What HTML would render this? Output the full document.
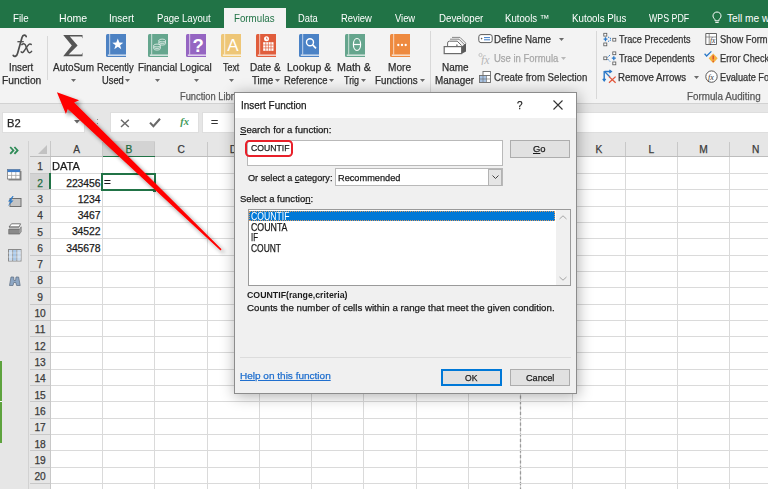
<!DOCTYPE html>
<html><head><meta charset="utf-8"><style>
html,body{margin:0;padding:0;}
.k{-webkit-text-stroke:0.25px currentColor;}
body{width:768px;height:489px;overflow:hidden;position:relative;font-family:"Liberation Sans", sans-serif;background:#e6e6e6;}
div,svg{font-family:"Liberation Sans", sans-serif;}
</style></head><body>
<div style="position:absolute;left:0.00px;top:0.00px;width:768.00px;height:28.00px;background:#217346;"></div>
<div style="position:absolute;left:224.00px;top:8.00px;width:62.00px;height:20.00px;background:#f3f3f3;"></div>
<div style="position:absolute;left:13.42px;top:13.78px;font-size:10.2px;line-height:10.2px;color:#ffffff;white-space:pre;font-weight:400;transform:scaleX(0.9574);transform-origin:0 0;">File</div>
<div style="position:absolute;left:59.15px;top:13.78px;font-size:10.2px;line-height:10.2px;color:#ffffff;white-space:pre;font-weight:400;transform:scaleX(1.0381);transform-origin:0 0;">Home</div>
<div style="position:absolute;left:109.10px;top:13.78px;font-size:10.2px;line-height:10.2px;color:#ffffff;white-space:pre;font-weight:400;transform:scaleX(0.9804);transform-origin:0 0;">Insert</div>
<div style="position:absolute;left:157.23px;top:13.78px;font-size:10.2px;line-height:10.2px;color:#ffffff;white-space:pre;font-weight:400;transform:scaleX(0.9396);transform-origin:0 0;">Page Layout</div>
<div style="position:absolute;left:234.22px;top:13.78px;font-size:10.2px;line-height:10.2px;color:#217346;white-space:pre;font-weight:400;transform:scaleX(0.9562);transform-origin:0 0;">Formulas</div>
<div style="position:absolute;left:297.86px;top:13.78px;font-size:10.2px;line-height:10.2px;color:#ffffff;white-space:pre;font-weight:400;transform:scaleX(0.9128);transform-origin:0 0;">Data</div>
<div style="position:absolute;left:340.85px;top:13.78px;font-size:10.2px;line-height:10.2px;color:#ffffff;white-space:pre;font-weight:400;transform:scaleX(0.9222);transform-origin:0 0;">Review</div>
<div style="position:absolute;left:395.41px;top:13.78px;font-size:10.2px;line-height:10.2px;color:#ffffff;white-space:pre;font-weight:400;transform:scaleX(0.9163);transform-origin:0 0;">View</div>
<div style="position:absolute;left:438.82px;top:13.78px;font-size:10.2px;line-height:10.2px;color:#ffffff;white-space:pre;font-weight:400;transform:scaleX(0.9540);transform-origin:0 0;">Developer</div>
<div style="position:absolute;left:505.23px;top:13.78px;font-size:10.2px;line-height:10.2px;color:#ffffff;white-space:pre;font-weight:400;transform:scaleX(0.9449);transform-origin:0 0;">Kutools ™</div>
<div style="position:absolute;left:571.72px;top:13.78px;font-size:10.2px;line-height:10.2px;color:#ffffff;white-space:pre;font-weight:400;transform:scaleX(0.9588);transform-origin:0 0;">Kutools Plus</div>
<div style="position:absolute;left:649.00px;top:13.78px;font-size:10.2px;line-height:10.2px;color:#ffffff;white-space:pre;font-weight:400;transform:scaleX(0.8676);transform-origin:0 0;">WPS PDF</div>
<div style="position:absolute;top:13.78px;font-size:10.2px;line-height:10.2px;color:#fff;white-space:pre;font-weight:400;left:727.00px;">Tell me wh</div>
<svg style="position:absolute;left:711.00px;top:11.00px;" width="12" height="13" viewBox="0 0 12 13"><path d="M6 1 C3.6 1 2 2.8 2 4.9 C2 6.5 3 7.4 3.9 8.5 L4.1 9.8 H7.9 L8.1 8.5 C9 7.4 10 6.5 10 4.9 C10 2.8 8.4 1 6 1 Z" fill="none" stroke="#fff" stroke-width="1"/><path d="M4.3 11.4 H7.7" stroke="#fff" stroke-width="1"/></svg>
<div style="position:absolute;left:0.00px;top:28.00px;width:768.00px;height:75.00px;background:#f3f3f3;"></div>
<div style="position:absolute;left:0.00px;top:102.50px;width:768.00px;height:1.00px;background:#d2d2d2;"></div>
<svg style="position:absolute;left:0.00px;top:28.00px;" width="40" height="34" viewBox="0 0 40 34"><g transform="translate(0,-28)"><path d="M26.2 36.6 C25.6 34.6 23 34.4 22 37.5 L17.6 53.2 C16.8 56.4 14.6 57 13.2 55.4" fill="none" stroke="#4d4d4d" stroke-width="1.7" stroke-linecap="round"/><path d="M17.4 41.7 H23.8" stroke="#4d4d4d" stroke-width="1.3"/><path d="M21.8 44.6 C23.6 43 25.2 43.6 26 46.4 L27.8 51 C28.6 53.2 30.2 53.2 31.6 51.4" fill="none" stroke="#4d4d4d" stroke-width="1.5" stroke-linecap="round"/><path d="M31.2 44.4 C30 43.4 28.8 44 27.2 46.4 L24.2 50.8 C23.2 52.6 22 53 21.2 51.8" fill="none" stroke="#4d4d4d" stroke-width="1.5" stroke-linecap="round"/></g></svg>
<div class="k" style="position:absolute;left:8.93px;top:63.20px;font-size:10.0px;line-height:10.0px;color:#2e2e2e;white-space:pre;font-weight:400;transform:scaleX(0.9667);transform-origin:0 0;">Insert</div>
<div class="k" style="position:absolute;left:1.68px;top:76.00px;font-size:10.0px;line-height:10.0px;color:#2e2e2e;white-space:pre;font-weight:400;transform:scaleX(1.0244);transform-origin:0 0;">Function</div>
<div style="position:absolute;left:47.00px;top:36.00px;width:1.00px;height:44.00px;background:#d8d8d8;"></div>
<svg style="position:absolute;left:0.00px;top:28.00px;" width="90" height="34" viewBox="0 0 90 34"><g transform="translate(0,-28)"><path d="M63.2 35.1 L82.5 35.1 L82.5 38.4 L81.6 36.6 L69.8 36.6 L77.6 45.4 L68.6 54.4 L81.6 54.4 L82.5 52.4 L82.5 56.2 L63.2 56.2 L71.8 45.4 Z" fill="#555"/></g></svg>
<div class="k" style="position:absolute;left:52.50px;top:63.20px;font-size:10.0px;line-height:10.0px;color:#2e2e2e;white-space:pre;font-weight:400;transform:scaleX(0.9951);transform-origin:0 0;">AutoSum</div>
<svg style="position:absolute;left:70.50px;top:79.30px;" width="5" height="3" viewBox="0 0 5 3"><path d="M0 0 H5 L2.5 3 Z" fill="#6a6a6a"/></svg>
<svg style="position:absolute;left:106.00px;top:34.00px;" width="20" height="23" viewBox="0 0 20 23"><path d="M1.5 0 H20 V23 H1.5 Q0 23 0 21.5 V1.5 Q0 0 1.5 0 Z" fill="#4d82c3"/><rect x="3.1" y="0" width="1.1" height="20.5" fill="#fff" opacity="0.6"/><path d="M1.8 20.6 H20 V21.7 H1.8 Z" fill="#fff"/><path d="M11.8 4.6 L13.3 8.6 L17.3 8.7 L14.1 11.2 L15.3 15.2 L11.8 12.8 L8.3 15.2 L9.5 11.2 L6.3 8.7 L10.3 8.6 Z" fill="#fff"/></svg>
<div class="k" style="position:absolute;left:97.15px;top:63.20px;font-size:10.0px;line-height:10.0px;color:#2e2e2e;white-space:pre;font-weight:400;transform:scaleX(0.9409);transform-origin:0 0;">Recently</div>
<div class="k" style="position:absolute;left:102.15px;top:76.00px;font-size:10.0px;line-height:10.0px;color:#2e2e2e;white-space:pre;font-weight:400;transform:scaleX(0.9315);transform-origin:0 0;">Used</div>
<svg style="position:absolute;left:125.30px;top:79.30px;" width="5" height="3" viewBox="0 0 5 3"><path d="M0 0 H5 L2.5 3 Z" fill="#6a6a6a"/></svg>
<svg style="position:absolute;left:148.00px;top:34.00px;" width="20" height="23" viewBox="0 0 20 23"><path d="M1.5 0 H20 V23 H1.5 Q0 23 0 21.5 V1.5 Q0 0 1.5 0 Z" fill="#65a68e"/><rect x="3.1" y="0" width="1.1" height="20.5" fill="#fff" opacity="0.6"/><path d="M1.8 20.6 H20 V21.7 H1.8 Z" fill="#fff"/><g fill="none" stroke="#fff" stroke-width="0.9" opacity="0.75"><ellipse cx="14.2" cy="6.5" rx="3.3" ry="1.4"/><path d="M10.899999999999999 6.5 V9.7 A3.3 1.4 0 0 0 17.5 9.7 V6.5"/><path d="M10.899999999999999 8.1 A3.3 1.4 0 0 0 17.5 8.1"/></g><g fill="none" stroke="#fff" stroke-width="0.9" opacity="0.75"><ellipse cx="9" cy="11.5" rx="3.3" ry="1.4"/><path d="M5.7 11.5 V14.7 A3.3 1.4 0 0 0 12.3 14.7 V11.5"/><path d="M5.7 13.1 A3.3 1.4 0 0 0 12.3 13.1"/></g></svg>
<div class="k" style="position:absolute;left:137.52px;top:63.20px;font-size:10.0px;line-height:10.0px;color:#2e2e2e;white-space:pre;font-weight:400;transform:scaleX(0.9767);transform-origin:0 0;">Financial</div>
<svg style="position:absolute;left:154.50px;top:79.30px;" width="5" height="3" viewBox="0 0 5 3"><path d="M0 0 H5 L2.5 3 Z" fill="#6a6a6a"/></svg>
<svg style="position:absolute;left:186.00px;top:34.00px;" width="20" height="23" viewBox="0 0 20 23"><path d="M1.5 0 H20 V23 H1.5 Q0 23 0 21.5 V1.5 Q0 0 1.5 0 Z" fill="#9565c2"/><rect x="3.1" y="0" width="1.1" height="20.5" fill="#fff" opacity="0.6"/><path d="M1.8 20.6 H20 V21.7 H1.8 Z" fill="#fff"/><text x="12.2" y="17.6" text-anchor="middle" font-family="Liberation Sans" font-weight="700" font-size="18.5" fill="#fff">?</text></svg>
<div class="k" style="position:absolute;left:180.20px;top:63.20px;font-size:10.0px;line-height:10.0px;color:#2e2e2e;white-space:pre;font-weight:400;transform:scaleX(1.0017);transform-origin:0 0;">Logical</div>
<svg style="position:absolute;left:194.00px;top:79.30px;" width="5" height="3" viewBox="0 0 5 3"><path d="M0 0 H5 L2.5 3 Z" fill="#6a6a6a"/></svg>
<svg style="position:absolute;left:221.00px;top:34.00px;" width="20" height="23" viewBox="0 0 20 23"><path d="M1.5 0 H20 V23 H1.5 Q0 23 0 21.5 V1.5 Q0 0 1.5 0 Z" fill="#eec677"/><rect x="3.1" y="0" width="1.1" height="20.5" fill="#fff" opacity="0.6"/><path d="M1.8 20.6 H20 V21.7 H1.8 Z" fill="#fff"/><text x="12" y="17.2" text-anchor="middle" font-family="Liberation Sans" font-size="17" fill="#fff">A</text></svg>
<div class="k" style="position:absolute;left:222.72px;top:63.20px;font-size:10.0px;line-height:10.0px;color:#2e2e2e;white-space:pre;font-weight:400;transform:scaleX(0.8895);transform-origin:0 0;">Text</div>
<svg style="position:absolute;left:228.50px;top:79.30px;" width="5" height="3" viewBox="0 0 5 3"><path d="M0 0 H5 L2.5 3 Z" fill="#6a6a6a"/></svg>
<svg style="position:absolute;left:255.60px;top:34.00px;" width="20" height="23" viewBox="0 0 20 23"><path d="M1.5 0 H20 V23 H1.5 Q0 23 0 21.5 V1.5 Q0 0 1.5 0 Z" fill="#e05d3c"/><rect x="3.1" y="0" width="1.1" height="20.5" fill="#fff" opacity="0.6"/><path d="M1.8 20.6 H20 V21.7 H1.8 Z" fill="#fff"/><circle cx="10.5" cy="4.8" r="2.5" fill="#fff"/><path d="M10.5 3.4 V5 H11.8" stroke="#e05d3c" stroke-width="0.7" fill="none"/><rect x="7.2" y="8.2" width="10.3" height="8.6" fill="#fff"/><path d="M7.2 11 H17.5 M7.2 13.9 H17.5 M9.8 8.2 V16.8 M12.4 8.2 V16.8 M15 8.2 V16.8" stroke="#e05d3c" stroke-width="0.7"/></svg>
<div class="k" style="position:absolute;left:249.70px;top:62.80px;font-size:10.0px;line-height:10.0px;color:#2e2e2e;white-space:pre;font-weight:400;transform:scaleX(1.0034);transform-origin:0 0;">Date &amp;</div>
<div class="k" style="position:absolute;left:252.21px;top:75.60px;font-size:10.0px;line-height:10.0px;color:#2e2e2e;white-space:pre;font-weight:400;transform:scaleX(0.9717);transform-origin:0 0;">Time</div>
<svg style="position:absolute;left:275.10px;top:79.30px;" width="5" height="3" viewBox="0 0 5 3"><path d="M0 0 H5 L2.5 3 Z" fill="#6a6a6a"/></svg>
<svg style="position:absolute;left:299.00px;top:34.00px;" width="20" height="23" viewBox="0 0 20 23"><path d="M1.5 0 H20 V23 H1.5 Q0 23 0 21.5 V1.5 Q0 0 1.5 0 Z" fill="#4a82c6"/><rect x="3.1" y="0" width="1.1" height="20.5" fill="#fff" opacity="0.6"/><path d="M1.8 20.6 H20 V21.7 H1.8 Z" fill="#fff"/><circle cx="11" cy="8.3" r="3.5" fill="none" stroke="#fff" stroke-width="1.4"/><path d="M13.6 10.9 L17 14.3" stroke="#fff" stroke-width="1.7"/></svg>
<div class="k" style="position:absolute;left:286.86px;top:62.80px;font-size:10.0px;line-height:10.0px;color:#2e2e2e;white-space:pre;font-weight:400;transform:scaleX(1.0484);transform-origin:0 0;">Lookup &amp;</div>
<div class="k" style="position:absolute;left:283.95px;top:75.60px;font-size:10.0px;line-height:10.0px;color:#2e2e2e;white-space:pre;font-weight:400;transform:scaleX(0.9421);transform-origin:0 0;">Reference</div>
<svg style="position:absolute;left:328.70px;top:79.30px;" width="5" height="3" viewBox="0 0 5 3"><path d="M0 0 H5 L2.5 3 Z" fill="#6a6a6a"/></svg>
<svg style="position:absolute;left:344.70px;top:34.00px;" width="20" height="23" viewBox="0 0 20 23"><path d="M1.5 0 H20 V23 H1.5 Q0 23 0 21.5 V1.5 Q0 0 1.5 0 Z" fill="#65a58d"/><rect x="3.1" y="0" width="1.1" height="20.5" fill="#fff" opacity="0.6"/><path d="M1.8 20.6 H20 V21.7 H1.8 Z" fill="#fff"/><ellipse cx="12" cy="10.5" rx="3.6" ry="6" fill="none" stroke="#fff" stroke-width="1.2"/><path d="M8.4 10.5 H15.6" stroke="#fff" stroke-width="1.2"/></svg>
<div class="k" style="position:absolute;left:336.94px;top:62.80px;font-size:10.0px;line-height:10.0px;color:#2e2e2e;white-space:pre;font-weight:400;transform:scaleX(1.0717);transform-origin:0 0;">Math &amp;</div>
<div class="k" style="position:absolute;left:343.82px;top:75.60px;font-size:10.0px;line-height:10.0px;color:#2e2e2e;white-space:pre;font-weight:400;transform:scaleX(0.8938);transform-origin:0 0;">Trig</div>
<svg style="position:absolute;left:360.70px;top:79.30px;" width="5" height="3" viewBox="0 0 5 3"><path d="M0 0 H5 L2.5 3 Z" fill="#6a6a6a"/></svg>
<svg style="position:absolute;left:389.70px;top:34.00px;" width="20" height="23" viewBox="0 0 20 23"><path d="M1.5 0 H20 V23 H1.5 Q0 23 0 21.5 V1.5 Q0 0 1.5 0 Z" fill="#ee8a3f"/><rect x="3.1" y="0" width="1.1" height="20.5" fill="#fff" opacity="0.6"/><path d="M1.8 20.6 H20 V21.7 H1.8 Z" fill="#fff"/><circle cx="8.3" cy="11" r="1.15" fill="#fff"/><circle cx="12" cy="11" r="1.15" fill="#fff"/><circle cx="15.7" cy="11" r="1.15" fill="#fff"/></svg>
<div class="k" style="position:absolute;left:388.19px;top:62.80px;font-size:10.0px;line-height:10.0px;color:#2e2e2e;white-space:pre;font-weight:400;transform:scaleX(1.0093);transform-origin:0 0;">More</div>
<div class="k" style="position:absolute;left:374.82px;top:75.60px;font-size:10.0px;line-height:10.0px;color:#2e2e2e;white-space:pre;font-weight:400;transform:scaleX(0.9810);transform-origin:0 0;">Functions</div>
<svg style="position:absolute;left:419.50px;top:79.30px;" width="5" height="3" viewBox="0 0 5 3"><path d="M0 0 H5 L2.5 3 Z" fill="#6a6a6a"/></svg>
<div class="k" style="position:absolute;top:91.60px;font-size:10.0px;line-height:10.0px;color:#595959;white-space:pre;font-weight:400;left:179.50px;transform:scaleX(0.93);transform-origin:0 0;">Function Library</div>
<div style="position:absolute;left:430.30px;top:31.00px;width:1.00px;height:68.00px;background:#d8d8d8;"></div>
<svg style="position:absolute;left:438.00px;top:32.00px;" width="34" height="28" viewBox="0 0 34 28"><g transform="translate(-438,-32)"><path d="M452 37.4 H460 L466 43.4" fill="none" stroke="#7a7a7a" stroke-width="0.9"/><path d="M450 39.2 H459 L465 45.2" fill="none" stroke="#7a7a7a" stroke-width="0.9"/><path d="M447.6 46.4 V43 Q447.6 41.2 449.4 41.2 H457.2 L461.6 45.6" fill="#fff" stroke="#6b6b6b" stroke-width="1"/><circle cx="456.9" cy="45.2" r="0.9" fill="#8a8a8a"/><path d="M461.8 46.4 L466 43.2 V51.6 L461.8 53.8 Z" fill="#5a5a5a"/><rect x="444.2" y="46.6" width="17.4" height="7" fill="#fff" stroke="#6b6b6b" stroke-width="1.2"/></g></svg>
<div class="k" style="position:absolute;left:441.80px;top:62.80px;font-size:10.0px;line-height:10.0px;color:#2e2e2e;white-space:pre;font-weight:400;transform:scaleX(0.9961);transform-origin:0 0;">Name</div>
<div class="k" style="position:absolute;left:435.11px;top:75.60px;font-size:10.0px;line-height:10.0px;color:#2e2e2e;white-space:pre;font-weight:400;transform:scaleX(0.9896);transform-origin:0 0;">Manager</div>
<svg style="position:absolute;left:478.00px;top:34.00px;" width="15" height="10" viewBox="0 0 15 10"><rect x="0.8" y="0.6" width="13.4" height="8" rx="2.2" fill="#fff" stroke="#5a5a5a" stroke-width="1"/><path d="M6 3.6 H12 M6 5.8 H12" stroke="#3d7cc9" stroke-width="1"/><circle cx="3.6" cy="4.6" r="0.8" fill="#5a5a5a"/></svg>
<div class="k" style="position:absolute;left:494.02px;top:35.40px;font-size:10.0px;line-height:10.0px;color:#333;white-space:pre;font-weight:400;transform:scaleX(0.9755);transform-origin:0 0;">Define Name</div>
<svg style="position:absolute;left:558.50px;top:38.10px;" width="5" height="3" viewBox="0 0 5 3"><path d="M0 0 H5 L2.5 3 Z" fill="#6a6a6a"/></svg>
<svg style="position:absolute;left:478.00px;top:52.00px;" width="14" height="13" viewBox="0 0 14 13"><text x="3" y="11.5" font-family="Liberation Serif" font-style="italic" font-size="12" fill="#b8b8b8">fx</text><circle cx="2.5" cy="3" r="1.6" fill="none" stroke="#b8b8b8" stroke-width="0.8"/></svg>
<div class="k" style="position:absolute;left:494.04px;top:53.90px;font-size:10.0px;line-height:10.0px;color:#a8a8a8;white-space:pre;font-weight:400;transform:scaleX(0.9478);transform-origin:0 0;">Use in Formula</div>
<svg style="position:absolute;left:560.80px;top:57.30px;" width="5" height="3" viewBox="0 0 5 3"><path d="M0 0 H5 L2.5 3 Z" fill="#b8b8b8"/></svg>
<svg style="position:absolute;left:479.00px;top:71.00px;" width="12" height="12" viewBox="0 0 12 12"><rect x="4" y="0.5" width="7.5" height="5" fill="#fff" stroke="#6b6b6b" stroke-width="0.9"/><rect x="0.5" y="4.5" width="11" height="7" fill="#fff" stroke="#6b6b6b" stroke-width="0.9"/><rect x="1" y="5" width="6.5" height="6" fill="#a9c4e4"/><path d="M0.5 8 H11.5 M4 4.5 V11.5 M7.5 4.5 V11.5" stroke="#6b6b6b" stroke-width="0.6"/></svg>
<div class="k" style="position:absolute;left:494.32px;top:72.80px;font-size:10.0px;line-height:10.0px;color:#333;white-space:pre;font-weight:400;transform:scaleX(0.9644);transform-origin:0 0;">Create from Selection</div>
<div style="position:absolute;left:596.00px;top:31.00px;width:1.00px;height:68.00px;background:#d8d8d8;"></div>
<svg style="position:absolute;left:602.00px;top:32.00px;" width="16" height="15" viewBox="0 0 16 15"><g transform="translate(-602,-32)"><rect x="603.8" y="33.3" width="3" height="2.8" fill="#fff" stroke="#555" stroke-width="0.8"/><rect x="603.8" y="43.0" width="3" height="2.8" fill="#fff" stroke="#555" stroke-width="0.8"/><rect x="612.8" y="38.3" width="3" height="2.8" fill="#fff" stroke="#555" stroke-width="0.8"/><path d="M603.6 39.2 H607.4 M605.5 37.2 V41.2" stroke="#2a78c8" stroke-width="1.3"/><path d="M608 37 L611 38.6 M608 41.5 L611 39.9" stroke="#2a78c8" stroke-width="1" stroke-dasharray="1.4 0.8"/></g></svg>
<div class="k" style="position:absolute;left:618.82px;top:35.40px;font-size:10.0px;line-height:10.0px;color:#333;white-space:pre;font-weight:400;transform:scaleX(0.9103);transform-origin:0 0;">Trace Precedents</div>
<svg style="position:absolute;left:602.00px;top:50.00px;" width="16" height="16" viewBox="0 0 16 16"><g transform="translate(-602,-50)"><rect x="603.8" y="56.9" width="3" height="2.8" fill="#fff" stroke="#555" stroke-width="0.8"/><rect x="612.8" y="51.9" width="3" height="2.8" fill="#fff" stroke="#555" stroke-width="0.8"/><rect x="612.8" y="62.0" width="3" height="2.8" fill="#fff" stroke="#555" stroke-width="0.8"/><path d="M611.8 58.2 H615.8 M613.8 56.2 V60.2" stroke="#2a78c8" stroke-width="1.3"/><path d="M607.5 57.5 L610.5 54.5 M607.5 59 L610.5 62" stroke="#2a78c8" stroke-width="1" stroke-dasharray="1.4 0.8"/></g></svg>
<div class="k" style="position:absolute;left:618.82px;top:54.20px;font-size:10.0px;line-height:10.0px;color:#333;white-space:pre;font-weight:400;transform:scaleX(0.9225);transform-origin:0 0;">Trace Dependents</div>
<svg style="position:absolute;left:602.00px;top:69.00px;" width="16" height="16" viewBox="0 0 16 16"><g transform="translate(-602,-69)"><path d="M604.2 71 V80.5 M602.8 78.8 L604.2 80.8 L605.6 78.8" stroke="#2a78c8" stroke-width="1.4" fill="none"/><path d="M604.5 71.5 H611 M609.4 70 L611.4 71.5 L609.4 73" stroke="#2a78c8" stroke-width="1.3" fill="none"/><path d="M605 72 L610 77" stroke="#2a78c8" stroke-width="1.2"/><path d="M609 76.6 L615.6 82.8 M615.6 76.6 L609 82.8" stroke="#e2563b" stroke-width="1.3"/></g></svg>
<div class="k" style="position:absolute;left:618.23px;top:72.80px;font-size:10.0px;line-height:10.0px;color:#333;white-space:pre;font-weight:400;transform:scaleX(0.9654);transform-origin:0 0;">Remove Arrows</div>
<svg style="position:absolute;left:694.00px;top:76.10px;" width="5" height="3" viewBox="0 0 5 3"><path d="M0 0 H5 L2.5 3 Z" fill="#6a6a6a"/></svg>
<svg style="position:absolute;left:704.00px;top:32.00px;" width="15" height="14" viewBox="0 0 15 14"><g transform="translate(-704,-32)"><path d="M705.8 33.5 H716.5 V44.5 H705.8 Z" fill="#fff" stroke="#666" stroke-width="1"/><path d="M705.8 37 H716.5 M709.2 33.5 V44.5" stroke="#777" stroke-width="0.8"/><text x="710" y="43" font-family="Liberation Serif" font-style="italic" font-size="7.5" fill="#333">fx</text></g></svg>
<div class="k" style="position:absolute;top:35.40px;font-size:10.0px;line-height:10.0px;color:#333;white-space:pre;font-weight:400;left:720.20px;transform:scaleX(0.93);transform-origin:0 0;">Show Formulas</div>
<svg style="position:absolute;left:704.00px;top:50.00px;" width="15" height="15" viewBox="0 0 15 15"><g transform="translate(-704,-50)"><path d="M708.6 53.4 L713.1 58.3 L708.6 63.2 L704.1 58.3 Z" transform="translate(4.6,0)" fill="#f5b342"/><path d="M704.6 53.8 L706.6 56 L711.4 51.4" stroke="#2a78c8" stroke-width="1.3" fill="none"/><path d="M713.2 55.6 V59.6" stroke="#d8402a" stroke-width="1.3"/><circle cx="713.2" cy="61.2" r="0.75" fill="#d8402a"/></g></svg>
<div class="k" style="position:absolute;top:54.20px;font-size:10.0px;line-height:10.0px;color:#333;white-space:pre;font-weight:400;left:720.20px;transform:scaleX(0.92);transform-origin:0 0;">Error Checking</div>
<svg style="position:absolute;left:704.00px;top:70.00px;" width="15" height="14" viewBox="0 0 15 14"><g transform="translate(-704,-70)"><circle cx="711.5" cy="76.6" r="5.7" fill="#fff" stroke="#555" stroke-width="1"/><text x="708" y="79.6" font-family="Liberation Serif" font-style="italic" font-size="8" fill="#333">fx</text></g></svg>
<div class="k" style="position:absolute;top:72.80px;font-size:10.0px;line-height:10.0px;color:#333;white-space:pre;font-weight:400;left:720.20px;transform:scaleX(0.92);transform-origin:0 0;">Evaluate Formula</div>
<div class="k" style="position:absolute;left:687.12px;top:91.70px;font-size:10.0px;line-height:10.0px;color:#595959;white-space:pre;font-weight:400;transform:scaleX(0.9810);transform-origin:0 0;">Formula Auditing</div>
<div style="position:absolute;left:0.00px;top:103.50px;width:768.00px;height:385.50px;background:#e6e6e6;"></div>
<div style="position:absolute;left:1.50px;top:112.30px;width:83.00px;height:20.70px;background:#fff;box-sizing:border-box;border:1px solid #dedede;"></div>
<div class="k" style="position:absolute;left:6.80px;top:118.86px;font-size:10.4px;line-height:10.4px;color:#262626;white-space:pre;font-weight:400;transform:scaleX(1.0762);transform-origin:0 0;">B2</div>
<svg style="position:absolute;left:73.50px;top:120.00px;" width="6" height="4" viewBox="0 0 6 4"><path d="M0 0 H6 L3 3.5 Z" fill="#6a6a6a"/></svg>
<div style="position:absolute;left:96.80px;top:118.70px;width:1.30px;height:1.30px;background:#8a8a8a;"></div>
<div style="position:absolute;left:96.80px;top:122.50px;width:1.30px;height:1.30px;background:#8a8a8a;"></div>
<div style="position:absolute;left:110.00px;top:112.30px;width:89.30px;height:20.70px;background:#fff;box-sizing:border-box;border:1px solid #dedede;"></div>
<svg style="position:absolute;left:120.00px;top:118.50px;" width="10" height="9" viewBox="0 0 10 9"><path d="M1 0.8 L8.8 8 M8.8 0.8 L1 8" stroke="#6a6a6a" stroke-width="1.5"/></svg>
<svg style="position:absolute;left:148.50px;top:118.00px;" width="12" height="10" viewBox="0 0 12 10"><path d="M1 4.6 L4.4 8.2 L11 0.8" stroke="#6a6a6a" stroke-width="2.1" fill="none"/></svg>
<svg style="position:absolute;left:178.50px;top:115.00px;" width="13" height="13" viewBox="0 0 13 13"><text x="1.2" y="10" font-family="Liberation Serif" font-style="italic" font-weight="700" font-size="10.5" fill="#3f9a5a">fx</text></svg>
<div style="position:absolute;left:202.30px;top:112.30px;width:566.00px;height:20.70px;background:#fff;box-sizing:border-box;border:1px solid #dedede;border-right:none;"></div>
<div class="k" style="position:absolute;left:210.99px;top:117.60px;font-size:10px;line-height:10px;color:#333;white-space:pre;font-weight:400;transform:scaleX(1.2245);transform-origin:0 0;">=</div>
<div style="position:absolute;left:28.00px;top:140.50px;width:1.00px;height:348.50px;background:#d2d2d2;"></div>
<svg style="position:absolute;left:9.00px;top:146.00px;" width="10" height="9" viewBox="0 0 10 9"><path d="M1.2 1 L4.4 4.4 L1.2 7.8 M5.4 1 L8.6 4.4 L5.4 7.8" stroke="#2e8b57" stroke-width="1.8" fill="none"/></svg>
<svg style="position:absolute;left:7.00px;top:169.00px;" width="15" height="12" viewBox="0 0 15 12"><rect x="1.5" y="2" width="13" height="9.5" fill="#888"/><rect x="0.5" y="0.5" width="12.5" height="9.5" fill="#fff" stroke="#7a7a7a" stroke-width="0.8"/><rect x="0.5" y="0.5" width="12.5" height="2.6" fill="#3d7cc9"/><path d="M0.5 6.4 H13 M4.6 3 V10 M8.8 3 V10" stroke="#9a9a9a" stroke-width="0.7"/></svg>
<svg style="position:absolute;left:6.50px;top:196.00px;" width="15" height="11" viewBox="0 0 15 11"><rect x="3" y="2.5" width="11" height="8" fill="#c4c4c4" stroke="#707070" stroke-width="1"/><path d="M5.6 0 L1 5.4 H3.6 L0.8 10.2 L6.6 4.4 H4.2 L6.6 0 Z" fill="#2a78c8"/></svg>
<svg style="position:absolute;left:8.00px;top:223.00px;" width="14" height="12" viewBox="0 0 14 12"><path d="M1 4 L3.5 0.8 H12.6 L11 4 Z" fill="#fff" stroke="#6a6a6a" stroke-width="0.9"/><path d="M1 6 H11.2 M1 4 H11.2" stroke="#6a6a6a" stroke-width="0.7"/><rect x="0.8" y="6.5" width="10.6" height="4.5" fill="#8a8a8a" stroke="#666" stroke-width="0.7"/><path d="M11.4 6.5 L13.2 3.8 V8.8 L11.4 11" fill="#aaa" stroke="#666" stroke-width="0.6"/></svg>
<svg style="position:absolute;left:8.00px;top:249.00px;" width="14" height="13" viewBox="0 0 14 13"><rect x="0.5" y="0.5" width="12.5" height="11.5" fill="#fff" stroke="#8a8a8a" stroke-width="1"/><rect x="1" y="1" width="3.3" height="10.5" fill="#c9dcf0"/><rect x="4.9" y="1" width="3.6" height="10.5" fill="#a9c9ea"/><rect x="9.1" y="1" width="3.4" height="10.5" fill="#c9dcf0"/><path d="M4.6 0.5 V12 M8.8 0.5 V12" stroke="#8a8a8a" stroke-width="0.8"/><path d="M0.5 4 H13 M0.5 8 H13" stroke="#fff" stroke-width="0.8" stroke-dasharray="1 1"/></svg>
<svg style="position:absolute;left:8.00px;top:275.00px;" width="14" height="12" viewBox="0 0 14 12"><path d="M1.5 10.5 L3 2 H5.6 L6 5.5 H7.6 L8 2 H10.6 L12.2 10.5 H8.6 L7.8 7.5 H5.8 L5 10.5 Z" fill="#8ea7c4" stroke="#5a6a80" stroke-width="0.7"/></svg>
<div style="position:absolute;left:0.00px;top:361.00px;width:2.00px;height:82.00px;background:#5ea33e;"></div>
<div style="position:absolute;left:0.00px;top:400.50px;width:2.00px;height:1.50px;background:#fff;"></div>
<div style="position:absolute;left:29.50px;top:141.40px;width:738.50px;height:15.78px;background:#e6e6e6;"></div>
<div style="position:absolute;left:29.50px;top:157.00px;width:21.00px;height:332.00px;background:#e6e6e6;"></div>
<div style="position:absolute;left:50.50px;top:157.00px;width:717.50px;height:332.00px;background:#fff;"></div>
<div style="position:absolute;left:102.74px;top:141.40px;width:52.24px;height:14.60px;background:#d3d3d3;"></div>
<div style="position:absolute;left:29.50px;top:173.50px;width:21.00px;height:16.32px;background:#d3d3d3;"></div>
<div style="position:absolute;left:50.00px;top:141.40px;width:1.00px;height:347.60px;background:#c8c8c8;"></div>
<div style="position:absolute;left:102.24px;top:141.90px;width:1.00px;height:15.78px;background:#c8c8c8;"></div>
<div style="position:absolute;left:102.24px;top:157.18px;width:1.00px;height:331.82px;background:#dadada;"></div>
<div style="position:absolute;left:154.48px;top:141.90px;width:1.00px;height:15.78px;background:#c8c8c8;"></div>
<div style="position:absolute;left:154.48px;top:157.18px;width:1.00px;height:331.82px;background:#dadada;"></div>
<div style="position:absolute;left:206.72px;top:141.90px;width:1.00px;height:15.78px;background:#c8c8c8;"></div>
<div style="position:absolute;left:206.72px;top:157.18px;width:1.00px;height:331.82px;background:#dadada;"></div>
<div style="position:absolute;left:258.96px;top:141.90px;width:1.00px;height:15.78px;background:#c8c8c8;"></div>
<div style="position:absolute;left:258.96px;top:157.18px;width:1.00px;height:331.82px;background:#dadada;"></div>
<div style="position:absolute;left:311.20px;top:141.90px;width:1.00px;height:15.78px;background:#c8c8c8;"></div>
<div style="position:absolute;left:311.20px;top:157.18px;width:1.00px;height:331.82px;background:#dadada;"></div>
<div style="position:absolute;left:363.44px;top:141.90px;width:1.00px;height:15.78px;background:#c8c8c8;"></div>
<div style="position:absolute;left:363.44px;top:157.18px;width:1.00px;height:331.82px;background:#dadada;"></div>
<div style="position:absolute;left:415.68px;top:141.90px;width:1.00px;height:15.78px;background:#c8c8c8;"></div>
<div style="position:absolute;left:415.68px;top:157.18px;width:1.00px;height:331.82px;background:#dadada;"></div>
<div style="position:absolute;left:467.92px;top:141.90px;width:1.00px;height:15.78px;background:#c8c8c8;"></div>
<div style="position:absolute;left:467.92px;top:157.18px;width:1.00px;height:331.82px;background:#dadada;"></div>
<div style="position:absolute;left:520.16px;top:141.90px;width:1.00px;height:15.78px;background:#c8c8c8;"></div>
<div style="position:absolute;left:520.16px;top:157.18px;width:1.00px;height:331.82px;background:#dadada;"></div>
<svg style="position:absolute;left:519.16px;top:157.18px" width="3" height="332"><path d="M1.5 1 V340" stroke="#9a9a9a" stroke-width="1.3" stroke-dasharray="3.2 2.2"/></svg>
<div style="position:absolute;left:572.40px;top:141.90px;width:1.00px;height:15.78px;background:#c8c8c8;"></div>
<div style="position:absolute;left:572.40px;top:157.18px;width:1.00px;height:331.82px;background:#dadada;"></div>
<div style="position:absolute;left:624.64px;top:141.90px;width:1.00px;height:15.78px;background:#c8c8c8;"></div>
<div style="position:absolute;left:624.64px;top:157.18px;width:1.00px;height:331.82px;background:#dadada;"></div>
<div style="position:absolute;left:676.88px;top:141.90px;width:1.00px;height:15.78px;background:#c8c8c8;"></div>
<div style="position:absolute;left:676.88px;top:157.18px;width:1.00px;height:331.82px;background:#dadada;"></div>
<div style="position:absolute;left:729.12px;top:141.90px;width:1.00px;height:15.78px;background:#c8c8c8;"></div>
<div style="position:absolute;left:729.12px;top:157.18px;width:1.00px;height:331.82px;background:#dadada;"></div>
<div style="position:absolute;left:781.36px;top:141.90px;width:1.00px;height:15.78px;background:#c8c8c8;"></div>
<div style="position:absolute;left:781.36px;top:157.18px;width:1.00px;height:331.82px;background:#dadada;"></div>
<div style="position:absolute;left:29.50px;top:156.40px;width:738.50px;height:1.00px;background:#bdbdbd;"></div>
<div style="position:absolute;left:29.50px;top:173.00px;width:21.00px;height:1.00px;background:#c8c8c8;"></div>
<div style="position:absolute;left:50.50px;top:173.00px;width:717.50px;height:1.00px;background:#dadada;"></div>
<div style="position:absolute;left:29.50px;top:189.31px;width:21.00px;height:1.00px;background:#c8c8c8;"></div>
<div style="position:absolute;left:50.50px;top:189.31px;width:717.50px;height:1.00px;background:#dadada;"></div>
<div style="position:absolute;left:29.50px;top:205.63px;width:21.00px;height:1.00px;background:#c8c8c8;"></div>
<div style="position:absolute;left:50.50px;top:205.63px;width:717.50px;height:1.00px;background:#dadada;"></div>
<div style="position:absolute;left:29.50px;top:221.94px;width:21.00px;height:1.00px;background:#c8c8c8;"></div>
<div style="position:absolute;left:50.50px;top:221.94px;width:717.50px;height:1.00px;background:#dadada;"></div>
<div style="position:absolute;left:29.50px;top:238.26px;width:21.00px;height:1.00px;background:#c8c8c8;"></div>
<div style="position:absolute;left:50.50px;top:238.26px;width:717.50px;height:1.00px;background:#dadada;"></div>
<div style="position:absolute;left:29.50px;top:254.58px;width:21.00px;height:1.00px;background:#c8c8c8;"></div>
<div style="position:absolute;left:50.50px;top:254.58px;width:717.50px;height:1.00px;background:#dadada;"></div>
<div style="position:absolute;left:29.50px;top:270.89px;width:21.00px;height:1.00px;background:#c8c8c8;"></div>
<div style="position:absolute;left:50.50px;top:270.89px;width:717.50px;height:1.00px;background:#dadada;"></div>
<div style="position:absolute;left:29.50px;top:287.21px;width:21.00px;height:1.00px;background:#c8c8c8;"></div>
<div style="position:absolute;left:50.50px;top:287.21px;width:717.50px;height:1.00px;background:#dadada;"></div>
<div style="position:absolute;left:29.50px;top:303.52px;width:21.00px;height:1.00px;background:#c8c8c8;"></div>
<div style="position:absolute;left:50.50px;top:303.52px;width:717.50px;height:1.00px;background:#dadada;"></div>
<div style="position:absolute;left:29.50px;top:319.84px;width:21.00px;height:1.00px;background:#c8c8c8;"></div>
<div style="position:absolute;left:50.50px;top:319.84px;width:717.50px;height:1.00px;background:#dadada;"></div>
<div style="position:absolute;left:29.50px;top:336.16px;width:21.00px;height:1.00px;background:#c8c8c8;"></div>
<div style="position:absolute;left:50.50px;top:336.16px;width:717.50px;height:1.00px;background:#dadada;"></div>
<div style="position:absolute;left:29.50px;top:352.47px;width:21.00px;height:1.00px;background:#c8c8c8;"></div>
<div style="position:absolute;left:50.50px;top:352.47px;width:717.50px;height:1.00px;background:#dadada;"></div>
<div style="position:absolute;left:29.50px;top:368.79px;width:21.00px;height:1.00px;background:#c8c8c8;"></div>
<div style="position:absolute;left:50.50px;top:368.79px;width:717.50px;height:1.00px;background:#dadada;"></div>
<div style="position:absolute;left:29.50px;top:385.10px;width:21.00px;height:1.00px;background:#c8c8c8;"></div>
<div style="position:absolute;left:50.50px;top:385.10px;width:717.50px;height:1.00px;background:#dadada;"></div>
<div style="position:absolute;left:29.50px;top:401.42px;width:21.00px;height:1.00px;background:#c8c8c8;"></div>
<div style="position:absolute;left:50.50px;top:401.42px;width:717.50px;height:1.00px;background:#dadada;"></div>
<div style="position:absolute;left:29.50px;top:417.74px;width:21.00px;height:1.00px;background:#c8c8c8;"></div>
<div style="position:absolute;left:50.50px;top:417.74px;width:717.50px;height:1.00px;background:#dadada;"></div>
<div style="position:absolute;left:29.50px;top:434.05px;width:21.00px;height:1.00px;background:#c8c8c8;"></div>
<div style="position:absolute;left:50.50px;top:434.05px;width:717.50px;height:1.00px;background:#dadada;"></div>
<div style="position:absolute;left:29.50px;top:450.37px;width:21.00px;height:1.00px;background:#c8c8c8;"></div>
<div style="position:absolute;left:50.50px;top:450.37px;width:717.50px;height:1.00px;background:#dadada;"></div>
<div style="position:absolute;left:29.50px;top:466.68px;width:21.00px;height:1.00px;background:#c8c8c8;"></div>
<div style="position:absolute;left:50.50px;top:466.68px;width:717.50px;height:1.00px;background:#dadada;"></div>
<div style="position:absolute;left:29.50px;top:483.00px;width:21.00px;height:1.00px;background:#c8c8c8;"></div>
<div style="position:absolute;left:50.50px;top:483.00px;width:717.50px;height:1.00px;background:#dadada;"></div>
<div style="position:absolute;left:102.74px;top:155.70px;width:52.24px;height:1.80px;background:#217346;"></div>
<div style="position:absolute;left:49.30px;top:173.00px;width:2.00px;height:16.32px;background:#217346;"></div>
<svg style="position:absolute;left:38.40px;top:144.60px;" width="9" height="9" viewBox="0 0 9 9"><path d="M9 0 V9 H0 Z" fill="#c2c2c2"/></svg>
<div class="k" style="position:absolute;top:144.58px;font-size:10.2px;line-height:10.2px;color:#3b3b3b;white-space:pre;font-weight:400;left:-123.38px;width:400px;text-align:center;">A</div>
<div class="k" style="position:absolute;top:144.58px;font-size:10.2px;line-height:10.2px;color:#1f6b40;white-space:pre;font-weight:400;left:-71.14px;width:400px;text-align:center;">B</div>
<div class="k" style="position:absolute;top:144.58px;font-size:10.2px;line-height:10.2px;color:#3b3b3b;white-space:pre;font-weight:400;left:-18.90px;width:400px;text-align:center;">C</div>
<div class="k" style="position:absolute;top:144.58px;font-size:10.2px;line-height:10.2px;color:#3b3b3b;white-space:pre;font-weight:400;left:33.34px;width:400px;text-align:center;">D</div>
<div class="k" style="position:absolute;top:144.58px;font-size:10.2px;line-height:10.2px;color:#3b3b3b;white-space:pre;font-weight:400;left:85.58px;width:400px;text-align:center;">E</div>
<div class="k" style="position:absolute;top:144.58px;font-size:10.2px;line-height:10.2px;color:#3b3b3b;white-space:pre;font-weight:400;left:137.82px;width:400px;text-align:center;">F</div>
<div class="k" style="position:absolute;top:144.58px;font-size:10.2px;line-height:10.2px;color:#3b3b3b;white-space:pre;font-weight:400;left:190.06px;width:400px;text-align:center;">G</div>
<div class="k" style="position:absolute;top:144.58px;font-size:10.2px;line-height:10.2px;color:#3b3b3b;white-space:pre;font-weight:400;left:242.30px;width:400px;text-align:center;">H</div>
<div class="k" style="position:absolute;top:144.58px;font-size:10.2px;line-height:10.2px;color:#3b3b3b;white-space:pre;font-weight:400;left:294.54px;width:400px;text-align:center;">I</div>
<div class="k" style="position:absolute;top:144.58px;font-size:10.2px;line-height:10.2px;color:#3b3b3b;white-space:pre;font-weight:400;left:346.78px;width:400px;text-align:center;">J</div>
<div class="k" style="position:absolute;top:144.58px;font-size:10.2px;line-height:10.2px;color:#3b3b3b;white-space:pre;font-weight:400;left:399.02px;width:400px;text-align:center;">K</div>
<div class="k" style="position:absolute;top:144.58px;font-size:10.2px;line-height:10.2px;color:#3b3b3b;white-space:pre;font-weight:400;left:451.26px;width:400px;text-align:center;">L</div>
<div class="k" style="position:absolute;top:144.58px;font-size:10.2px;line-height:10.2px;color:#3b3b3b;white-space:pre;font-weight:400;left:503.50px;width:400px;text-align:center;">M</div>
<div class="k" style="position:absolute;top:144.58px;font-size:10.2px;line-height:10.2px;color:#3b3b3b;white-space:pre;font-weight:400;left:555.74px;width:400px;text-align:center;">N</div>
<div class="k" style="position:absolute;top:162.26px;font-size:10.2px;line-height:10.2px;color:#3b3b3b;white-space:pre;font-weight:400;left:-159.90px;width:400px;text-align:center;">1</div>
<div class="k" style="position:absolute;top:178.58px;font-size:10.2px;line-height:10.2px;color:#1f6b40;white-space:pre;font-weight:400;left:-159.90px;width:400px;text-align:center;">2</div>
<div class="k" style="position:absolute;top:194.89px;font-size:10.2px;line-height:10.2px;color:#3b3b3b;white-space:pre;font-weight:400;left:-159.90px;width:400px;text-align:center;">3</div>
<div class="k" style="position:absolute;top:211.21px;font-size:10.2px;line-height:10.2px;color:#3b3b3b;white-space:pre;font-weight:400;left:-159.90px;width:400px;text-align:center;">4</div>
<div class="k" style="position:absolute;top:227.52px;font-size:10.2px;line-height:10.2px;color:#3b3b3b;white-space:pre;font-weight:400;left:-159.90px;width:400px;text-align:center;">5</div>
<div class="k" style="position:absolute;top:243.84px;font-size:10.2px;line-height:10.2px;color:#3b3b3b;white-space:pre;font-weight:400;left:-159.90px;width:400px;text-align:center;">6</div>
<div class="k" style="position:absolute;top:260.16px;font-size:10.2px;line-height:10.2px;color:#3b3b3b;white-space:pre;font-weight:400;left:-159.90px;width:400px;text-align:center;">7</div>
<div class="k" style="position:absolute;top:276.47px;font-size:10.2px;line-height:10.2px;color:#3b3b3b;white-space:pre;font-weight:400;left:-159.90px;width:400px;text-align:center;">8</div>
<div class="k" style="position:absolute;top:292.79px;font-size:10.2px;line-height:10.2px;color:#3b3b3b;white-space:pre;font-weight:400;left:-159.90px;width:400px;text-align:center;">9</div>
<div class="k" style="position:absolute;top:309.10px;font-size:10.2px;line-height:10.2px;color:#3b3b3b;white-space:pre;font-weight:400;left:-159.90px;width:400px;text-align:center;">10</div>
<div class="k" style="position:absolute;top:325.42px;font-size:10.2px;line-height:10.2px;color:#3b3b3b;white-space:pre;font-weight:400;left:-159.90px;width:400px;text-align:center;">11</div>
<div class="k" style="position:absolute;top:341.74px;font-size:10.2px;line-height:10.2px;color:#3b3b3b;white-space:pre;font-weight:400;left:-159.90px;width:400px;text-align:center;">12</div>
<div class="k" style="position:absolute;top:358.05px;font-size:10.2px;line-height:10.2px;color:#3b3b3b;white-space:pre;font-weight:400;left:-159.90px;width:400px;text-align:center;">13</div>
<div class="k" style="position:absolute;top:374.37px;font-size:10.2px;line-height:10.2px;color:#3b3b3b;white-space:pre;font-weight:400;left:-159.90px;width:400px;text-align:center;">14</div>
<div class="k" style="position:absolute;top:390.68px;font-size:10.2px;line-height:10.2px;color:#3b3b3b;white-space:pre;font-weight:400;left:-159.90px;width:400px;text-align:center;">15</div>
<div class="k" style="position:absolute;top:407.00px;font-size:10.2px;line-height:10.2px;color:#3b3b3b;white-space:pre;font-weight:400;left:-159.90px;width:400px;text-align:center;">16</div>
<div class="k" style="position:absolute;top:423.32px;font-size:10.2px;line-height:10.2px;color:#3b3b3b;white-space:pre;font-weight:400;left:-159.90px;width:400px;text-align:center;">17</div>
<div class="k" style="position:absolute;top:439.63px;font-size:10.2px;line-height:10.2px;color:#3b3b3b;white-space:pre;font-weight:400;left:-159.90px;width:400px;text-align:center;">18</div>
<div class="k" style="position:absolute;top:455.95px;font-size:10.2px;line-height:10.2px;color:#3b3b3b;white-space:pre;font-weight:400;left:-159.90px;width:400px;text-align:center;">19</div>
<div class="k" style="position:absolute;top:472.26px;font-size:10.2px;line-height:10.2px;color:#3b3b3b;white-space:pre;font-weight:400;left:-159.90px;width:400px;text-align:center;">20</div>
<div class="k" style="position:absolute;left:51.71px;top:162.19px;font-size:10.4px;line-height:10.4px;color:#1a1a1a;white-space:pre;font-weight:400;transform:scaleX(1.0640);transform-origin:0 0;">DATA</div>
<div class="k" style="position:absolute;top:178.51px;font-size:10.4px;line-height:10.4px;color:#1a1a1a;white-space:pre;font-weight:400;left:-299.66px;width:400px;text-align:right;letter-spacing:-0.1px;">223456</div>
<div class="k" style="position:absolute;top:194.82px;font-size:10.4px;line-height:10.4px;color:#1a1a1a;white-space:pre;font-weight:400;left:-299.66px;width:400px;text-align:right;letter-spacing:-0.1px;">1234</div>
<div class="k" style="position:absolute;top:211.14px;font-size:10.4px;line-height:10.4px;color:#1a1a1a;white-space:pre;font-weight:400;left:-299.66px;width:400px;text-align:right;letter-spacing:-0.1px;">3467</div>
<div class="k" style="position:absolute;top:227.45px;font-size:10.4px;line-height:10.4px;color:#1a1a1a;white-space:pre;font-weight:400;left:-299.66px;width:400px;text-align:right;letter-spacing:-0.1px;">34522</div>
<div class="k" style="position:absolute;top:243.77px;font-size:10.4px;line-height:10.4px;color:#1a1a1a;white-space:pre;font-weight:400;left:-299.66px;width:400px;text-align:right;letter-spacing:-0.1px;">345678</div>
<div style="position:absolute;left:101.3px;top:172.6px;width:54.5px;height:18.2px;box-sizing:border-box;border:2px solid #217346"></div>
<div style="position:absolute;left:152.80px;top:188.80px;width:3.20px;height:3.20px;background:#217346;"></div>
<div class="k" style="position:absolute;left:104.02px;top:177.51px;font-size:10.4px;line-height:10.4px;color:#1a1a1a;white-space:pre;font-weight:400;transform:scaleX(1.1185);transform-origin:0 0;">=</div>
<div style="position:absolute;left:234.4px;top:92.0px;width:342.5px;height:301.8px;background:#f0f0f0;box-sizing:border-box;border:1px solid #8c8c8c;box-shadow:1px 2px 14px rgba(0,0,0,0.32)"></div>
<div style="position:absolute;left:235.40px;top:93.00px;width:340.50px;height:25.00px;background:#fff;"></div>
<div class="k" style="position:absolute;left:241.31px;top:100.75px;font-size:10.3px;line-height:10.3px;color:#1a1a1a;white-space:pre;font-weight:400;transform:scaleX(0.9634);transform-origin:0 0;">Insert Function</div>
<div class="k" style="position:absolute;left:517.40px;top:100.45px;font-size:11px;line-height:11px;color:#222;white-space:pre;font-weight:400;transform:scaleX(0.9091);transform-origin:0 0;">?</div>
<svg style="position:absolute;left:552.50px;top:100.00px;" width="10" height="10" viewBox="0 0 10 10"><path d="M0.5 0.5 L9.5 9.5 M9.5 0.5 L0.5 9.5" stroke="#333" stroke-width="1.1"/></svg>
<div class="k" style="position:absolute;left:239.52px;top:125.06px;font-size:9.7px;line-height:9.7px;color:#1a1a1a;white-space:pre;font-weight:400;transform:scaleX(0.9924);transform-origin:0 0;"><u>S</u>earch for a function:</div>
<div style="position:absolute;left:246.90px;top:139.60px;width:255.80px;height:26.10px;background:#fff;box-sizing:border-box;border:1px solid #b9b9b9;"></div>
<div style="position:absolute;left:245.1px;top:139.7px;width:47.8px;height:17.3px;box-sizing:border-box;border:2.2px solid #e8202a;border-radius:4.5px"></div>
<div class="k" style="position:absolute;left:251.07px;top:143.16px;font-size:9.7px;line-height:9.7px;color:#1a1a1a;white-space:pre;font-weight:400;transform:scaleX(0.8935);transform-origin:0 0;">COUNTIF</div>
<div style="position:absolute;left:510.20px;top:139.50px;width:59.80px;height:18.20px;background:#e1e1e1;box-sizing:border-box;border:1px solid #adadad;"></div>
<div class="k" style="position:absolute;left:533.23px;top:143.75px;font-size:9.7px;line-height:9.7px;color:#1a1a1a;white-space:pre;font-weight:400;transform:scaleX(0.9727);transform-origin:0 0;"><u>G</u>o</div>
<div class="k" style="position:absolute;left:247.54px;top:172.75px;font-size:9.7px;line-height:9.7px;color:#1a1a1a;white-space:pre;font-weight:400;transform:scaleX(0.9447);transform-origin:0 0;">Or select a <u>c</u>ategory:</div>
<div style="position:absolute;left:335.20px;top:168.20px;width:167.40px;height:17.60px;background:#fff;box-sizing:border-box;border:1px solid #b9b9b9;"></div>
<div style="position:absolute;left:488.30px;top:168.50px;width:14.00px;height:17.00px;background:#e5e5e5;box-sizing:border-box;border:1px solid #b3b3b3;"></div>
<svg style="position:absolute;left:491.50px;top:174.50px;" width="7" height="5" viewBox="0 0 7 5"><path d="M0.5 0.5 L3.5 3.5 L6.5 0.5" stroke="#444" stroke-width="1" fill="none"/></svg>
<div class="k" style="position:absolute;left:338.06px;top:172.75px;font-size:9.7px;line-height:9.7px;color:#1a1a1a;white-space:pre;font-weight:400;transform:scaleX(0.9502);transform-origin:0 0;">Recommended</div>
<div class="k" style="position:absolute;left:240.12px;top:194.45px;font-size:9.7px;line-height:9.7px;color:#1a1a1a;white-space:pre;font-weight:400;transform:scaleX(0.9844);transform-origin:0 0;">Select a functio<u>n</u>:</div>
<div style="position:absolute;left:247.60px;top:209.20px;width:323.00px;height:77.00px;background:#fff;box-sizing:border-box;border:1px solid #9a9a9a;"></div>
<div style="position:absolute;left:248.60px;top:210.50px;width:306.50px;height:10.40px;background:#0078d7;box-sizing:border-box;border:1px dotted #d89a60;"></div>
<div style="position:absolute;left:251.17px;top:211.73px;font-size:10.2px;line-height:10.2px;color:#fff;white-space:pre;font-weight:400;transform:scaleX(0.8497);transform-origin:0 0;">COUNTIF</div>
<div class="k" style="position:absolute;left:251.16px;top:222.63px;font-size:10.2px;line-height:10.2px;color:#1a1a1a;white-space:pre;font-weight:400;transform:scaleX(0.8629);transform-origin:0 0;">COUNTA</div>
<div class="k" style="position:absolute;left:250.90px;top:233.03px;font-size:10.2px;line-height:10.2px;color:#1a1a1a;white-space:pre;font-weight:400;transform:scaleX(0.7611);transform-origin:0 0;">IF</div>
<div class="k" style="position:absolute;left:251.18px;top:243.73px;font-size:10.2px;line-height:10.2px;color:#1a1a1a;white-space:pre;font-weight:400;transform:scaleX(0.8283);transform-origin:0 0;">COUNT</div>
<div style="position:absolute;left:555.50px;top:210.20px;width:14.10px;height:75.00px;background:#f0f0f0;"></div>
<svg style="position:absolute;left:558.50px;top:215.00px;" width="8" height="5" viewBox="0 0 8 5"><path d="M0.5 4 L4 0.8 L7.5 4" stroke="#a6a6a6" stroke-width="1" fill="none"/></svg>
<svg style="position:absolute;left:558.50px;top:276.00px;" width="8" height="5" viewBox="0 0 8 5"><path d="M0.5 1 L4 4.2 L7.5 1" stroke="#a6a6a6" stroke-width="1" fill="none"/></svg>
<div style="position:absolute;left:247.25px;top:290.25px;font-size:9.7px;line-height:9.7px;color:#1a1a1a;white-space:pre;font-weight:700;transform:scaleX(0.9057);transform-origin:0 0;">COUNTIF(range,criteria)</div>
<div class="k" style="position:absolute;left:247.31px;top:303.15px;font-size:9.7px;line-height:9.7px;color:#1a1a1a;white-space:pre;font-weight:400;transform:scaleX(1.0003);transform-origin:0 0;">Counts the number of cells within a range that meet the given condition.</div>
<div style="position:absolute;left:240.00px;top:357.20px;width:331.20px;height:1.00px;background:#dcdcdc;"></div>
<div class="k" style="position:absolute;left:239.80px;top:371.45px;font-size:9.7px;line-height:9.7px;color:#1f6fce;white-space:pre;font-weight:400;transform:scaleX(1.0332);transform-origin:0 0;"><u>Help on this function</u></div>
<div style="position:absolute;left:441.10px;top:368.60px;width:60.50px;height:17.10px;background:#e1e1e1;box-sizing:border-box;border:2px solid #0078d7;"></div>
<div class="k" style="position:absolute;left:464.77px;top:373.06px;font-size:9.7px;line-height:9.7px;color:#1a1a1a;white-space:pre;font-weight:400;transform:scaleX(0.8815);transform-origin:0 0;">OK</div>
<div style="position:absolute;left:510.20px;top:368.60px;width:59.80px;height:17.10px;background:#e1e1e1;box-sizing:border-box;border:1px solid #adadad;"></div>
<div class="k" style="position:absolute;left:526.14px;top:373.06px;font-size:9.7px;line-height:9.7px;color:#1a1a1a;white-space:pre;font-weight:400;transform:scaleX(0.9416);transform-origin:0 0;">Cancel</div>
<svg style="position:absolute;left:0;top:0" width="768" height="489"><defs><filter id="sh" x="-20%" y="-20%" width="140%" height="140%"><feGaussianBlur in="SourceAlpha" stdDeviation="2.2"/><feOffset dx="2.5" dy="2.5" result="b"/><feComponentTransfer><feFuncA type="linear" slope="0.45"/></feComponentTransfer><feMerge><feMergeNode/><feMergeNode in="SourceGraphic"/></feMerge></filter></defs><path d="M56.90 92.20 L79.06 100.31 L74.15 102.39 L221.11 248.78 A0.8 0.8 0 0 1 220.00 249.94 L67.78 109.02 L65.90 114.01 Z" fill="#ff0000" filter="url(#sh)"/></svg>
</body></html>
